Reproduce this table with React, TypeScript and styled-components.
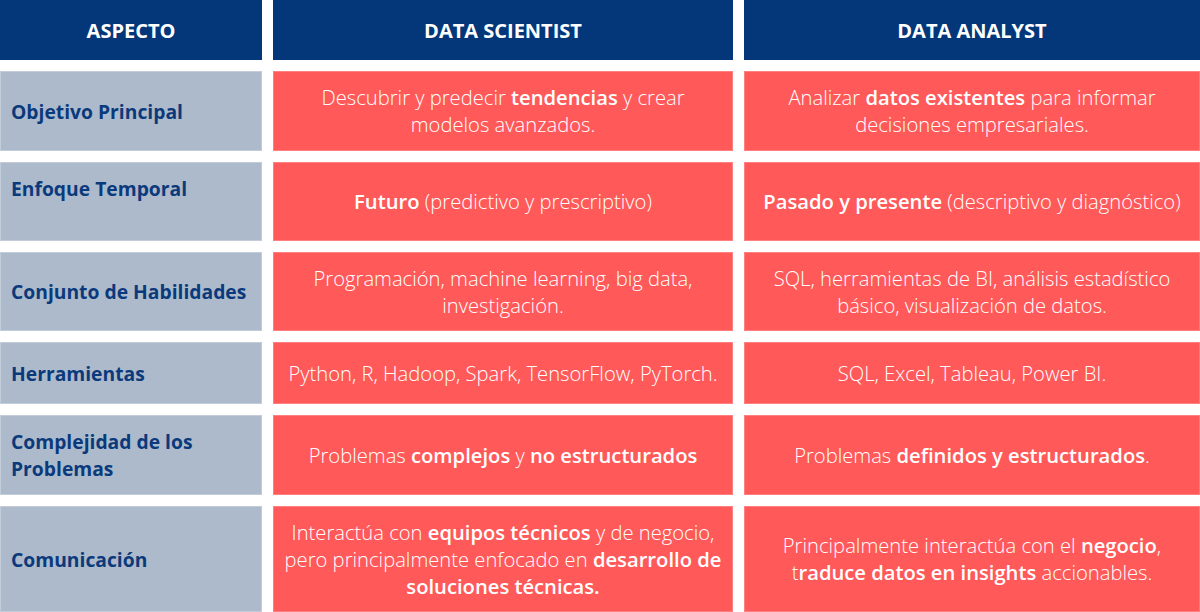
import React from 'react';
import styled, { createGlobalStyle } from 'styled-components';

const GlobalStyle = createGlobalStyle`
  html, body {
    margin: 0;
    padding: 0;
    background: #ffffff;
  }
  body {
    font-family: 'Open Sans', 'Liberation Sans', sans-serif;
  }
`;

type Row = {
  aspect: React.ReactNode;
  scientist: React.ReactNode;
  analyst: React.ReactNode;
  lift?: boolean;
};

const rows: Row[] = [
  {
    aspect: 'Objetivo Principal',
    scientist: (
      <>
        Descubrir y predecir <b>tendencias</b> y crear modelos avanzados.
      </>
    ),
    analyst: (
      <>
        Analizar <b>datos existentes</b> para informar decisiones empresariales.
      </>
    ),
  },
  {
    aspect: 'Enfoque Temporal',
    lift: true,
    scientist: (
      <>
        <b>Futuro</b> (predictivo y prescriptivo)
      </>
    ),
    analyst: (
      <>
        <b>Pasado y presente</b> (descriptivo y diagnóstico)
      </>
    ),
  },
  {
    aspect: 'Conjunto de Habilidades',
    scientist: 'Programación, machine learning, big data, investigación.',
    analyst: 'SQL, herramientas de BI, análisis estadístico básico, visualización de datos.',
  },
  {
    aspect: 'Herramientas',
    scientist: 'Python, R, Hadoop, Spark, TensorFlow, PyTorch.',
    analyst: 'SQL, Excel, Tableau, Power BI.',
  },
  {
    aspect: (
      <>
        Complejidad de los
        <br />
        Problemas
      </>
    ),
    scientist: (
      <>
        Problemas <b>complejos</b> y <b>no estructurados</b>
      </>
    ),
    analyst: (
      <>
        Problemas <b>definidos y estructurados</b>.
      </>
    ),
  },
  {
    aspect: 'Comunicación',
    scientist: (
      <>
        Interactúa con <b>equipos técnicos</b> y de negocio, pero principalmente enfocado en{' '}
        <b>
          desarrollo de
          <br />
          soluciones técnicas.
        </b>
      </>
    ),
    analyst: (
      <>
        Principalmente interactúa con el <b>negocio</b>, t<b>raduce datos en insights</b> accionables.
      </>
    ),
  },
];

const App = () => {
  return (
    <>
      <GlobalStyle />
      <Table>
        <HeadCell>ASPECTO</HeadCell>
        <HeadCell>DATA SCIENTIST</HeadCell>
        <HeadCell>DATA ANALYST</HeadCell>
        {rows.map((row, i) => (
          <React.Fragment key={i}>
            <AspectCell>
              <AspectText $lift={row.lift}>{row.aspect}</AspectText>
            </AspectCell>
            <ValueCell>
              <ValueText>{row.scientist}</ValueText>
            </ValueCell>
            <ValueCell>
              <ValueText>{row.analyst}</ValueText>
            </ValueCell>
          </React.Fragment>
        ))}
      </Table>
    </>
  );
};

export default App;

const Table = styled.div`
  display: grid;
  grid-template-columns: 262px 460px 1fr;
  grid-template-rows: 60px 80px 79px 79px 62px 80px 106px;
  column-gap: 11px;
  row-gap: 11px;
  width: 1200px;
  height: 612px;
  overflow: hidden;
`;

const HeadCell = styled.div`
  display: flex;
  align-items: center;
  justify-content: center;
  background: #03377a;
  color: #ffffff;
  font-weight: 700;
  font-size: 20px;
`;

const AspectCell = styled.div`
  display: flex;
  align-items: center;
  box-sizing: border-box;
  padding: 0 10px;
  background: #adbacb;
  border: 1px solid #c3ccd9;
`;

const AspectText = styled.div<{ $lift?: boolean }>`
  color: #0b3a7c;
  font-weight: 700;
  font-size: 19.3px;
  line-height: 27px;
  margin-bottom: ${(p) => (p.$lift ? '26px' : '0')};
`;

const ValueCell = styled.div`
  display: flex;
  align-items: center;
  justify-content: center;
  box-sizing: border-box;
  padding: 0 8px;
  background: #ff5959;
  border: 1px solid #ff8080;
`;

const ValueText = styled.p`
  margin: 0;
  color: #ffffff;
  font-weight: 300;
  font-size: 20.2px;
  line-height: 27px;
  text-align: center;

  b {
    font-weight: 600;
  }
`;
